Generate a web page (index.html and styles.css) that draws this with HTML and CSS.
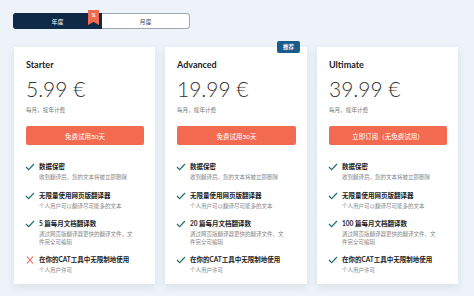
FILE: index.html
```html
<!DOCTYPE html>
<html lang="zh">
<head>
<meta charset="utf-8">
<link rel="stylesheet" href="styles.css">
</head>
<body>
<div class="page">
  <div class="toggle">
    <div class="opt active">年度</div>
    <div class="opt">月度</div>
    <div class="ribbon"><svg width="11" height="15" viewBox="0 0 11 15"><polygon points="0,0 11,0 11,15 5.5,12 0,15" fill="#ef6a4f"/></svg><span>%</span></div>
  </div>
  <div class="cards">
    <div class="card">
      <div class="name">Starter</div>
      <div class="price">5.99 €</div>
      <div class="billing">每月，按年计费</div>
      <div class="btn">免费试用30天</div>
      <ul class="features">
        <li><svg class="ic" viewBox="0 0 10 8"><polyline points="1,4 3.6,6.6 9,1" fill="none" stroke="#22706a" stroke-width="1.2"/></svg><div><div class="ft">数据保密</div><div class="fs">收到翻译后，您的文本将被立即删除</div></div></li>
        <li><svg class="ic" viewBox="0 0 10 8"><polyline points="1,4 3.6,6.6 9,1" fill="none" stroke="#22706a" stroke-width="1.2"/></svg><div><div class="ft">无限量使用网页版翻译器</div><div class="fs">个人用户可以翻译尽可能多的文本</div></div></li>
        <li><svg class="ic" viewBox="0 0 10 8"><polyline points="1,4 3.6,6.6 9,1" fill="none" stroke="#22706a" stroke-width="1.2"/></svg><div><div class="ft">5 篇每月文档翻译数</div><div class="fs">通过网页版翻译器更快的翻译文件，文<br>件完全可编辑</div></div></li>
        <li><svg class="ic" viewBox="0 0 10 8"><path d="M2,0.5 L8,7.5 M8,0.5 L2,7.5" fill="none" stroke="#e0605a" stroke-width="1.1"/></svg><div><div class="ft">在你的CAT工具中无限制地使用</div><div class="fs">个人用户许可</div></div></li>
      </ul>
    </div>
    <div class="card">
      <div class="rec">推荐</div>
      <div class="name">Advanced</div>
      <div class="price">19.99 €</div>
      <div class="billing">每月，按年计费</div>
      <div class="btn">免费试用30天</div>
      <ul class="features">
        <li><svg class="ic" viewBox="0 0 10 8"><polyline points="1,4 3.6,6.6 9,1" fill="none" stroke="#22706a" stroke-width="1.2"/></svg><div><div class="ft">数据保密</div><div class="fs">收到翻译后，您的文本将被立即删除</div></div></li>
        <li><svg class="ic" viewBox="0 0 10 8"><polyline points="1,4 3.6,6.6 9,1" fill="none" stroke="#22706a" stroke-width="1.2"/></svg><div><div class="ft">无限量使用网页版翻译器</div><div class="fs">个人用户可以翻译尽可能多的文本</div></div></li>
        <li><svg class="ic" viewBox="0 0 10 8"><polyline points="1,4 3.6,6.6 9,1" fill="none" stroke="#22706a" stroke-width="1.2"/></svg><div><div class="ft">20 篇每月文档翻译数</div><div class="fs">通过网页版翻译器更快的翻译文件，文<br>件完全可编辑</div></div></li>
        <li><svg class="ic" viewBox="0 0 10 8"><polyline points="1,4 3.6,6.6 9,1" fill="none" stroke="#22706a" stroke-width="1.2"/></svg><div><div class="ft">在你的CAT工具中无限制地使用</div><div class="fs">个人用户许可</div></div></li>
      </ul>
    </div>
    <div class="card">
      <div class="name">Ultimate</div>
      <div class="price">39.99 €</div>
      <div class="billing">每月，按年计费</div>
      <div class="btn">立即订阅（无免费试用）</div>
      <ul class="features">
        <li><svg class="ic" viewBox="0 0 10 8"><polyline points="1,4 3.6,6.6 9,1" fill="none" stroke="#22706a" stroke-width="1.2"/></svg><div><div class="ft">数据保密</div><div class="fs">收到翻译后，您的文本将被立即删除</div></div></li>
        <li><svg class="ic" viewBox="0 0 10 8"><polyline points="1,4 3.6,6.6 9,1" fill="none" stroke="#22706a" stroke-width="1.2"/></svg><div><div class="ft">无限量使用网页版翻译器</div><div class="fs">个人用户可以翻译尽可能多的文本</div></div></li>
        <li><svg class="ic" viewBox="0 0 10 8"><polyline points="1,4 3.6,6.6 9,1" fill="none" stroke="#22706a" stroke-width="1.2"/></svg><div><div class="ft">100 篇每月文档翻译数</div><div class="fs">通过网页版翻译器更快的翻译文件，文<br>件完全可编辑</div></div></li>
        <li><svg class="ic" viewBox="0 0 10 8"><polyline points="1,4 3.6,6.6 9,1" fill="none" stroke="#22706a" stroke-width="1.2"/></svg><div><div class="ft">在你的CAT工具中无限制地使用</div><div class="fs">个人用户许可</div></div></li>
      </ul>
    </div>
  </div>
</div>
</body>
</html>
```
FILE: styles.css
```css
* { box-sizing: border-box; }
html, body { margin: 0; padding: 0; }
body {
  background: #edf3f9;
  font-family: Lato, "Noto Sans CJK SC", sans-serif;
  color: #222;
  width: 474px;
  height: 296px;
  overflow: hidden;
}
.page { padding: 13px 0 0 13px; }
.toggle {
  position: relative;
  width: 177px;
  height: 16px;
  display: flex;
  border: 1px solid #9ea6ae;
  border-radius: 3px;
  background: #fff;
}
.opt {
  flex: 1;
  display: flex;
  align-items: center;
  justify-content: center;
  font-size: 6px;
  color: #444;
  font-family: "Noto Sans CJK SC", sans-serif;
}
.opt.active {
  flex: 0 0 89px;
  background: #0e2a47;
  color: #fff;
  margin: -1px 0 -1px -1px;
  border-radius: 3px 0 0 3px;
}
.ribbon {
  position: absolute;
  left: 74px;
  top: -4px;
  width: 11px;
  height: 15px;
}
.ribbon svg { display: block; }
.ribbon span {
  position: absolute;
  left: 0; top: 2px;
  width: 11px;
  text-align: center;
  font-size: 5px;
  color: #fff;
  font-weight: 700;
}
.cards {
  display: flex;
  gap: 10px;
  margin-top: 18px;
  padding-left: 1px;
}
.card {
  position: relative;
  width: 141px;
  height: 237px;
  background: #fff;
  padding: 12px 11px 0 12px;
  box-shadow: 0 3px 8px rgba(30, 60, 100, 0.10);
}
.card:nth-child(2) { width: 142px; }
.rec {
  position: absolute;
  right: 7px;
  top: -6px;
  width: 23px;
  height: 12px;
  background: #1b5b8b;
  border-radius: 2px;
  color: #fff;
  font-size: 5.5px;
  font-weight: 700;
  display: flex;
  align-items: center;
  justify-content: center;
  font-family: "Noto Sans CJK SC", sans-serif;
}
.name {
  font-size: 9px;
  line-height: 11px;
  font-weight: 700;
  color: #222;
}
.price {
  margin-top: 7px;
  font-size: 21px;
  line-height: 24px;
  font-weight: 300;
  color: #333;
}
.billing {
  margin-top: 5px;
  font-size: 5.6px;
  line-height: 8px;
  color: #777;
  font-family: "Noto Sans CJK SC", sans-serif;
}
.btn {
  margin-top: 12px;
  height: 19px;
  background: #f26b50;
  border-radius: 2px;
  color: #fff;
  font-size: 6.5px;
  display: flex;
  align-items: center;
  justify-content: center;
  font-family: Lato, "Noto Sans CJK SC", sans-serif;
}
.features {
  list-style: none;
  margin: 17px 0 0 0;
  padding: 0;
  display: flex;
  flex-direction: column;
  gap: 9px;
}
.features li {
  display: flex;
  gap: 4px;
}
.ic {
  flex: 0 0 10px;
  width: 10px;
  height: 8px;
  margin-top: 1px;
  margin-left: -1px;
}
.ft {
  font-size: 6.5px;
  line-height: 9px;
  font-weight: 700;
  color: #222;
  font-family: Lato, "Noto Sans CJK SC", sans-serif;
}
.fs {
  margin-top: 3px;
  font-size: 5.5px;
  line-height: 7.5px;
  color: #888;
  font-family: "Noto Sans CJK SC", sans-serif;
}
```
